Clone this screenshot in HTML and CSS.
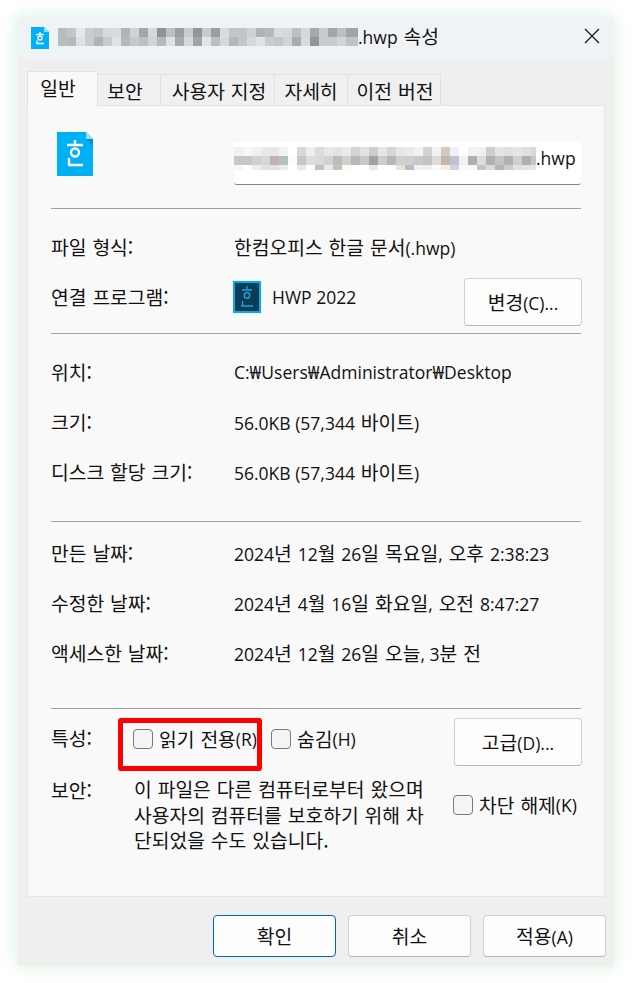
FILE: index.html
```html
<!DOCTYPE html>
<html lang="ko">
<head>
<meta charset="utf-8">
<title>속성</title>
<link rel="stylesheet" href="styles.css">
</head>
<body>
<div class="window">
  <header class="titlebar">
    <svg class="title-icon" viewBox="0 0 18 22" width="18" height="22"><path fill="#00b0f5" d="M0 0h13l5 5v17H0z"/><path fill="#8fdcfb" d="M13 0l5 5h-5z"/><path fill="none" stroke="#fff" stroke-width="1.3" d="M9 5v2M5 7.5h8M5 16.5h8M6 16.5v-3"/><circle cx="9" cy="11" r="2" fill="none" stroke="#fff" stroke-width="1.3"/></svg>
    <span class="mosaic mosaic-title"></span>
    <span class="title-text"><span class="lt">.hwp</span> 속성</span>
    <svg class="close" viewBox="0 0 16 16" width="16" height="16"><path d="M1 1l14 14M15 1L1 15" stroke="#1a1a1a" stroke-width="1.3" fill="none"/></svg>
  </header>
  <nav class="tabs">
    <span class="tab tab-active">일반</span>
    <span class="tab tab-b">보안</span>
    <span class="tab tab-c">사용자 지정</span>
    <span class="tab tab-d">자세히</span>
    <span class="tab tab-e">이전 버전</span>
  </nav>
  <main class="panel">
    <section class="head-row">
      <svg class="file-icon" viewBox="0 0 36 44" width="36" height="44"><path fill="#00b0f5" d="M0 0h29l7 7v37H0z"/><path fill="#8fdcfb" d="M29 0l7 7h-7z"/><path fill="#0a8fd0" d="M29 7h7v7z"/><path fill="none" stroke="#fff" stroke-width="2.4" d="M18 8v4M10 13h16M11 33h15M12 33v-7"/><circle cx="18" cy="20.500" r="4" fill="none" stroke="#fff" stroke-width="2.4"/></svg>
      <div class="name-box"><span class="mosaic mosaic-name"></span><span class="lt name-ext">.hwp</span></div>
    </section>
    <section class="group group-type">
      <div class="row"><span class="label">파일 형식:</span><span class="value">한컴오피스 한글 문서<span class="lt">(.hwp)</span></span></div>
      <div class="row row-app">
        <span class="label">연결 프로그램:</span>
        <span class="value app">
          <svg class="app-icon" viewBox="0 0 28 32" width="28" height="32"><rect width="28" height="32" fill="#00aef0"/><rect x="2" y="2" width="24" height="28" fill="#0b3c57"/><path fill="none" stroke="#1ea7e0" stroke-width="1.3" d="M14 5v3M9 9h10M8 25h12M9.500 25v-5"/><circle cx="14" cy="14.500" r="2.800" fill="none" stroke="#1ea7e0" stroke-width="1.3"/></svg>
          <span class="lt">HWP 2022</span>
        </span>
        <button class="btn btn-change">변경<span class="lt">(C)...</span></button>
      </div>
    </section>
    <section class="group group-loc">
      <div class="row"><span class="label">위치:</span><span class="value lt">C:₩Users₩Administrator₩Desktop</span></div>
      <div class="row"><span class="label">크기:</span><span class="value"><span class="lt">56.0KB (57,344</span> 바이트<span class="lt">)</span></span></div>
      <div class="row"><span class="label">디스크 할당 크기:</span><span class="value"><span class="lt">56.0KB (57,344</span> 바이트<span class="lt">)</span></span></div>
    </section>
    <section class="group group-date">
      <div class="row"><span class="label">만든 날짜:</span><span class="value"><span class="lt">2024</span>년 <span class="lt">12</span>월 <span class="lt">26</span>일 목요일<span class="lt">,</span> 오후 <span class="lt">2:38:23</span></span></div>
      <div class="row"><span class="label">수정한 날짜:</span><span class="value"><span class="lt">2024</span>년 <span class="lt">4</span>월 <span class="lt">16</span>일 화요일<span class="lt">,</span> 오전 <span class="lt">8:47:27</span></span></div>
      <div class="row"><span class="label">액세스한 날짜:</span><span class="value"><span class="lt">2024</span>년 <span class="lt">12</span>월 <span class="lt">26</span>일 오늘<span class="lt">, 3</span>분 전</span></div>
    </section>
    <section class="group group-attr">
      <div class="attr-row">
        <span class="label">특성:</span>
        <label class="check check-ro"><i class="box"></i>읽기 전용<span class="lt">(R)</span></label>
        <label class="check check-hidden"><i class="box"></i>숨김<span class="lt">(H)</span></label>
        <button class="btn btn-adv">고급<span class="lt">(D)...</span></button>
      </div>
      <div class="sec-row">
        <span class="label">보안:</span>
        <p class="sec-text">이 파일은 다른 컴퓨터로부터 왔으며<br>사용자의 컴퓨터를 보호하기 위해 차<br>단되었을 수도 있습니다.</p>
        <label class="check check-unblock"><i class="box"></i>차단 해제<span class="lt">(K)</span></label>
      </div>
    </section>
  </main>
  <footer class="actions">
    <button class="btn btn-foot btn-primary">확인</button>
    <button class="btn btn-foot">취소</button>
    <button class="btn btn-foot">적용<span class="lt">(A)</span></button>
  </footer>
</div>
</body>
</html>
```

FILE: styles.css
```css
*, *::after { box-sizing: border-box; }
html, body { margin: 0; height: 100%; background: #fff; }
body {
  padding: 18px 19px 18px 18px;
  font-family: "Noto Sans CJK KR", "Noto Sans", sans-serif;
  font-size: 19.3px;
  word-spacing: 0.5px;
  color: #111;
}
.lt { font-family: "Open Sans", "Noto Sans", sans-serif; font-size: 17.5px; word-spacing: 0; }
.window {
  width: 595px;
  height: 947px;
  background: #efefef;
  box-shadow: 0 0 10px 2px #e3f7e6, 0 0 22px 4px #f2f7f3;
  display: flex;
  flex-direction: column;
}
.titlebar {
  height: 40px;
  background: #eff3f6;
  display: flex;
  align-items: center;
  padding: 0 13px;
  flex: none;
}
.title-text { line-height: 24px; white-space: nowrap; margin-top: -4px; }
.close { margin-left: auto; margin-top: -4px; }
.title-icon { margin-top: -1px; }
.mosaic { display: block; flex: none; background-repeat: no-repeat; }
.mosaic-title {
  width: 300px;
  height: 18px;
  margin-left: 9px;
  margin-top: -3px;
  background-size: 300px 9px;
  background-position: 0 0, 0 9px;
  background-image:
    linear-gradient(90deg,#b8bcbd 0 9px,#c2c6c7 0 18px,#e4e8e9 0 27px,#c8cccd 0 36px,#c2c6c7 0 45px,#d6dadb 0 54px,#d8dcdd 0 63px,#b0b4b5 0 72px,#d0d4d5 0 81px,#a2a6a7 0 90px,#d5d9da 0 99px,#8f9394 0 108px,#bcc0c1 0 117px,#9a9e9f 0 126px,#c8cccd 0 135px,#929697 0 144px,#c8cccd 0 153px,#9a9e9f 0 162px,#d8dcdd 0 171px,#c2c6c7 0 189px,#cdd1d2 0 198px,#afb3b4 0 207px,#b5b9ba 0 216px,#d8dcdd 0 225px,#d5d9da 0 234px,#bcc0c1 0 243px,#d5d9da 0 252px,#a5a9aa 0 261px,#c8cccd 0 270px,#a2a6a7 0 279px,#bcc0c1 0 288px,#a0a4a5 0 300px),
    linear-gradient(90deg,#b8bcbd 0 9px,#b5b9ba 0 18px,#dde1e2 0 27px,#c8cccd 0 36px,#b0b4b5 0 45px,#c8cccd 0 54px,#dfe3e4 0 63px,#b5b9ba 0 72px,#c4c8c9 0 81px,#bcc0c1 0 90px,#d0d4d5 0 99px,#b5b9ba 0 108px,#dde1e2 0 117px,#a5a9aa 0 126px,#d5d9da 0 135px,#a0a4a5 0 144px,#e0e4e5 0 153px,#bcc0c1 0 162px,#d5d9da 0 171px,#b5b9ba 0 180px,#c2c6c7 0 189px,#d5d9da 0 198px,#e0e4e5 0 207px,#c8cccd 0 216px,#c4c8c9 0 225px,#d0d4d5 0 234px,#a8acad 0 243px,#d8dcdd 0 252px,#929697 0 261px,#c8cccd 0 279px,#d2d6d7 0 288px,#bfc3c4 0 300px);
}
.tabs {
  display: flex;
  align-items: flex-end;
  height: 47px;
  padding-left: 9px;
  flex: none;
  position: relative;
  z-index: 1;
}
.tab {
  height: 31px;
  border: 1px solid #e2e2e2;
  border-bottom: 0;
  border-left: 0;
  background: #f0f0f0;
  display: flex;
  align-items: center;
  justify-content: center;
  padding-top: 2px;
  white-space: nowrap;
}
.tab-active {
  width: 71px;
  height: 35px;
  margin-bottom: -1px;
  background: #f9f9f9;
  border-left: 1px solid #e2e2e2;
  border-radius: 2px 2px 0 0;
  padding: 0 9px 2px 0;
}
.tab-b { width: 63px; padding-right: 8px; }
.tab-c { width: 114px; padding-left: 3px; }
.tab-d { width: 73px; }
.tab-e { width: 93px; padding-left: 2px; }
.panel {
  width: 578px;
  height: 792px;
  margin-left: 9px;
  background: #f9f9f9;
  border: 1px solid #e5e5e5;
  padding: 0 23px;
  flex: none;
  display: flex;
  flex-direction: column;
}
.head-row {
  height: 102px;
  flex: none;
  display: flex;
  justify-content: space-between;
  padding-top: 26px;
}
.file-icon { margin-left: 6px; }
.name-box {
  width: 347px;
  height: 43px;
  margin-top: 10px;
  background: #fff;
  border-bottom: 1px solid #868686;
  border-radius: 3px;
  display: flex;
  align-items: flex-start;
  padding-top: 5px;
}
.mosaic-name {
  width: 302px;
  height: 23px;
  background-size: 302px 9px, 302px 9px, 302px 5px;
  background-position: 0 0, 0 9px, 0 18px;
  background-image:
    linear-gradient(90deg,#f3f0ef 0 9px,#f7f7f6 0 18px,#f0f1f2 0 27px,#ece8e8 0 36px,#e8e6e8 0 45px,#f1f3f3 0 54px,#fff 0 63px,#d8d8d8 0 72px,#eceeef 0 81px,#dcdcdc 0 90px,#e8e8e6 0 99px,#e6e4e3 0 108px,#eaeaea 0 117px,#d4d2d2 0 126px,#e2e2e0 0 135px,#cfcdc9 0 144px,#e6e6e6 0 153px,#d8d6d4 0 162px,#e6e6e4 0 171px,#eaeaea 0 180px,#f2f2f2 0 189px,#d2d2d2 0 198px,#f2f2f2 0 207px,#d2cac6 0 216px,#eef1f5 0 225px,#fff 0 234px,#f2f2f2 0 243px,#f0f0f0 0 252px,#d2cdcd 0 261px,#e4e4e8 0 270px,#e0e0e0 0 279px,#e8e4e4 0 288px,#e0e0e0 0 297px,#d8d8d8 0 302px),
    linear-gradient(90deg,#c8c8c8 0 9px,#c4c6c8 0 18px,#cfd3d0 0 27px,#d8d6d6 0 36px,#bfb4b2 0 45px,#b5bfc2 0 54px,#fbfbfb 0 63px,#c5c8c4 0 72px,#dedede 0 81px,#d8dad8 0 90px,#d4d2cc 0 99px,#bdbdb8 0 108px,#d0d0cc 0 117px,#b8b8b4 0 126px,#c8c8c4 0 135px,#a4a2a0 0 144px,#cccccc 0 153px,#b8b6b4 0 162px,#d4d0c6 0 171px,#c8d2d4 0 180px,#c8c8c8 0 189px,#c0c4c0 0 198px,#dedcda 0 207px,#c2b6ae 0 216px,#bcc4d2 0 225px,#f0f2f2 0 234px,#b0aeaa 0 243px,#dcdcdc 0 252px,#b4b0b0 0 261px,#c4c4c8 0 270px,#b0b0b0 0 279px,#d0d0d0 0 288px,#b0b0ac 0 297px,#c4c8c8 0 302px),
    linear-gradient(90deg,#f5f5f5 0 9px,#fff 0 18px,#eee 0 27px,#e2e0e0 0 45px,#e8ecec 0 54px,#fff 0 63px,#e8e8e8 0 72px,#fff 0 81px,#c0c0c0 0 90px,#e8e8ec 0 99px,#c4c4bc 0 108px,#fbfbfb 0 117px,#fff 0 135px,#e8e8e8 0 144px,#fff 0 162px,#e8e4dc 0 171px,#b8bcc4 0 180px,#f0f0f0 0 189px,#eee 0 198px,#fafafa 0 207px,#f8ece4 0 216px,#d0d4dc 0 225px,#fafafa 0 243px,#c4c4c0 0 252px,#dcdce0 0 261px,#b8b4b4 0 270px,#ccc 0 279px,#e0e0e0 0 288px,#e4e4e4 0 302px);
}
.name-ext { line-height: 23px; }
.group {
  border-top: 1px solid #a0a0a0;
  flex: none;
}
.row {
  display: flex;
  align-items: center;
  height: 50px;
}
.label { width: 183px; flex: none; line-height: 24px; white-space: nowrap; }
.value { line-height: 24px; white-space: nowrap; }
.group-type { height: 125px; padding-top: 13px; }
.group-loc { height: 188px; padding-top: 13px; }
.group-date { height: 187px; padding-top: 6px; }
.group-attr { padding-top: 5px; }
.row-app { position: relative; }
.app { display: flex; align-items: center; gap: 11px; margin-left: -1px; }
.btn {
  font: inherit;
  word-spacing: inherit;
  color: #111;
  background: #fdfdfd;
  border: 1px solid #d0d0d0;
  border-bottom-color: #b5b5b5;
  border-radius: 4px;
  padding: 0;
  line-height: 24px;
}
.btn-change { position: absolute; right: -1px; top: 6px; width: 118px; height: 48px; }
.attr-row {
  display: flex;
  align-items: flex-start;
  height: 56px;
  position: relative;
}
.attr-row .label { width: 82px; padding-top: 12px; line-height: 24px; }
.check { display: inline-flex; align-items: center; line-height: 24px; white-space: nowrap; }
.box {
  display: block;
  width: 20px;
  height: 20px;
  background: #f4f4f4;
  border: 1px solid #7a7a7a;
  border-radius: 4px;
  flex: none;
  margin-right: 6px;
}
.check-ro { position: relative; margin-top: 13px; }
.check-ro::after {
  content: "";
  position: absolute;
  left: -15px;
  top: -9px;
  width: 144px;
  height: 53px;
  border: 5px solid #ff0000;
  border-radius: 3px;
  pointer-events: none;
}
.check-hidden { margin-left: 14px; margin-top: 13px; }
.btn-adv { position: absolute; right: -1px; top: 4px; width: 128px; height: 48px; }
.sec-row { display: flex; align-items: flex-start; position: relative; padding-top: 7px; }
.sec-row .label { width: 83px; padding-top: 1px; }
.sec-text { margin: 0; line-height: 25.5px; white-space: nowrap; }
.check-unblock { position: absolute; left: 402px; top: 23px; }
.actions {
  display: flex;
  justify-content: flex-end;
  gap: 12px;
  padding: 18px 7px 0 0;
  flex: none;
}
.btn-foot { width: 123px; height: 42px; }
.btn-primary { border: 1px solid #0067c0; }
```
